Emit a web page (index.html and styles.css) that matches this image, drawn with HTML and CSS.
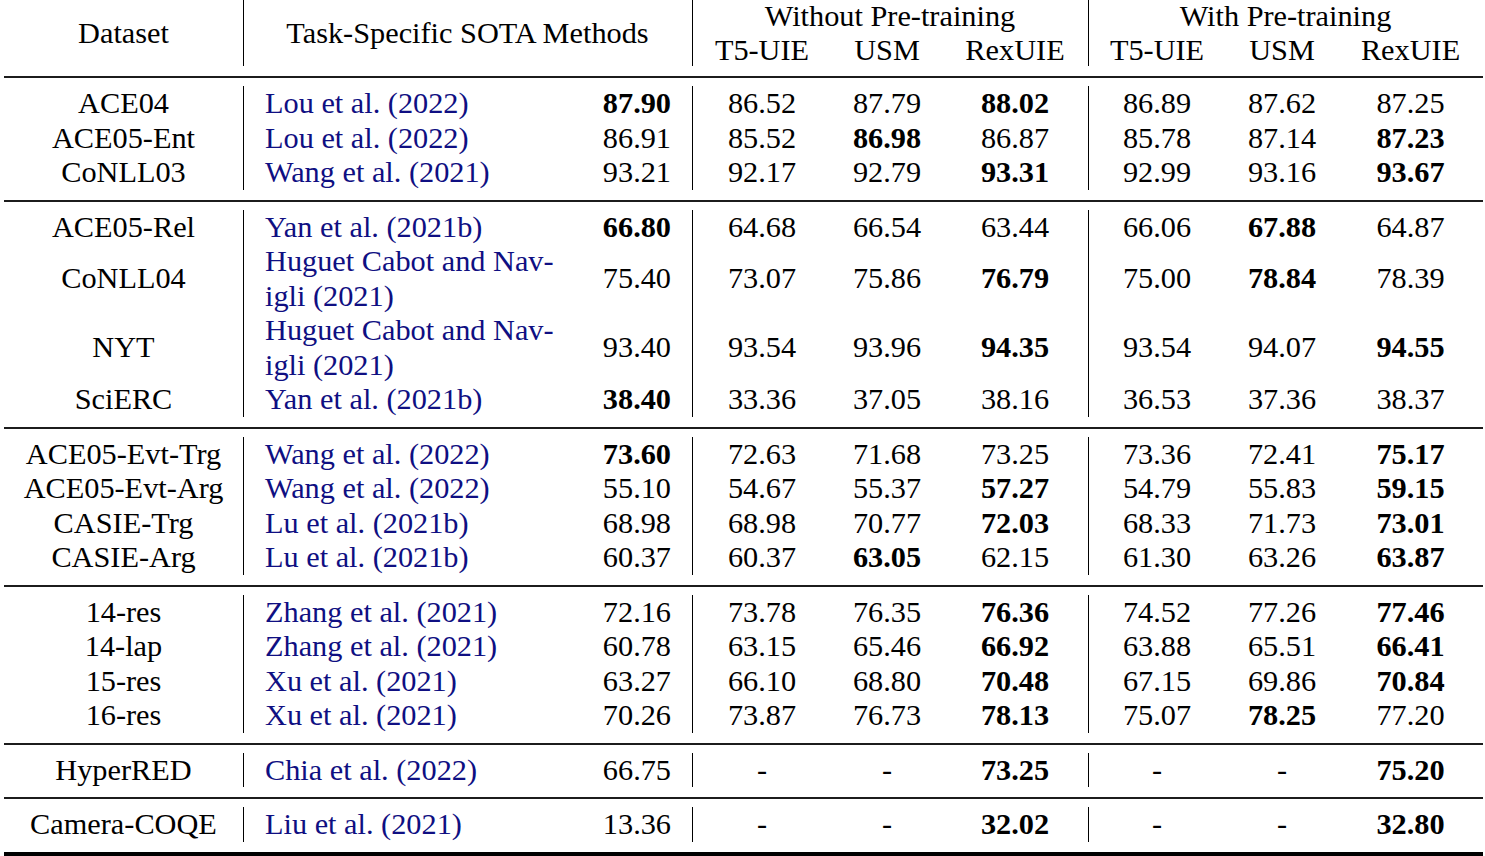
FILE: index.html
```html
<!DOCTYPE html>
<html lang="en">
<head>
<meta charset="utf-8">
<title>Results</title>
<link rel="stylesheet" href="styles.css">
</head>
<body>
<table class="results">
  <colgroup>
    <col class="c-ds"><col class="c-meth"><col class="c-sota">
    <col class="c-a1"><col class="c-a2"><col class="c-a3">
    <col class="c-b1"><col class="c-b2"><col class="c-b3">
  </colgroup>
  <thead>
    <tr class="h1">
      <th rowspan="2" class="tall">Dataset</th>
      <th rowspan="2" colspan="2" class="tall vl">Task-Specific SOTA Methods</th>
      <th colspan="3" class="vl">Without Pre-training</th>
      <th colspan="3" class="vl">With Pre-training</th>
    </tr>
    <tr class="h2">
      <th class="vl">T5-UIE</th><th>USM</th><th>RexUIE</th>
      <th class="vl">T5-UIE</th><th>USM</th><th>RexUIE</th>
    </tr>
  </thead>
  <tbody>
    <tr class="gap-a"><td colspan="9"></td></tr>
    <tr class="rule"><td colspan="9"></td></tr>
    <tr class="gap-b"><td colspan="9"></td></tr>

    <tr><td>ACE04</td><td class="meth vl">Lou et al. (2022)</td><td class="sota"><b>87.90</b></td><td class="vl">86.52</td><td>87.79</td><td><b>88.02</b></td><td class="vl">86.89</td><td>87.62</td><td>87.25</td></tr>
    <tr><td>ACE05-Ent</td><td class="meth vl">Lou et al. (2022)</td><td class="sota">86.91</td><td class="vl">85.52</td><td><b>86.98</b></td><td>86.87</td><td class="vl">85.78</td><td>87.14</td><td><b>87.23</b></td></tr>
    <tr><td>CoNLL03</td><td class="meth vl">Wang et al. (2021)</td><td class="sota">93.21</td><td class="vl">92.17</td><td>92.79</td><td><b>93.31</b></td><td class="vl">92.99</td><td>93.16</td><td><b>93.67</b></td></tr>

    <tr class="gap-a"><td colspan="9"></td></tr>
    <tr class="rule"><td colspan="9"></td></tr>
    <tr class="gap-b"><td colspan="9"></td></tr>

    <tr><td>ACE05-Rel</td><td class="meth vl">Yan et al. (2021b)</td><td class="sota"><b>66.80</b></td><td class="vl">64.68</td><td>66.54</td><td>63.44</td><td class="vl">66.06</td><td><b>67.88</b></td><td>64.87</td></tr>
    <tr><td>CoNLL04</td><td class="meth vl">Huguet Cabot and Nav-<br>igli (2021)</td><td class="sota">75.40</td><td class="vl">73.07</td><td>75.86</td><td><b>76.79</b></td><td class="vl">75.00</td><td><b>78.84</b></td><td>78.39</td></tr>
    <tr><td>NYT</td><td class="meth vl">Huguet Cabot and Nav-<br>igli (2021)</td><td class="sota">93.40</td><td class="vl">93.54</td><td>93.96</td><td><b>94.35</b></td><td class="vl">93.54</td><td>94.07</td><td><b>94.55</b></td></tr>
    <tr><td>SciERC</td><td class="meth vl">Yan et al. (2021b)</td><td class="sota"><b>38.40</b></td><td class="vl">33.36</td><td>37.05</td><td>38.16</td><td class="vl">36.53</td><td>37.36</td><td>38.37</td></tr>

    <tr class="gap-a"><td colspan="9"></td></tr>
    <tr class="rule"><td colspan="9"></td></tr>
    <tr class="gap-b"><td colspan="9"></td></tr>

    <tr><td>ACE05-Evt-Trg</td><td class="meth vl">Wang et al. (2022)</td><td class="sota"><b>73.60</b></td><td class="vl">72.63</td><td>71.68</td><td>73.25</td><td class="vl">73.36</td><td>72.41</td><td><b>75.17</b></td></tr>
    <tr><td>ACE05-Evt-Arg</td><td class="meth vl">Wang et al. (2022)</td><td class="sota">55.10</td><td class="vl">54.67</td><td>55.37</td><td><b>57.27</b></td><td class="vl">54.79</td><td>55.83</td><td><b>59.15</b></td></tr>
    <tr><td>CASIE-Trg</td><td class="meth vl">Lu et al. (2021b)</td><td class="sota">68.98</td><td class="vl">68.98</td><td>70.77</td><td><b>72.03</b></td><td class="vl">68.33</td><td>71.73</td><td><b>73.01</b></td></tr>
    <tr><td>CASIE-Arg</td><td class="meth vl">Lu et al. (2021b)</td><td class="sota">60.37</td><td class="vl">60.37</td><td><b>63.05</b></td><td>62.15</td><td class="vl">61.30</td><td>63.26</td><td><b>63.87</b></td></tr>

    <tr class="gap-a"><td colspan="9"></td></tr>
    <tr class="rule"><td colspan="9"></td></tr>
    <tr class="gap-b"><td colspan="9"></td></tr>

    <tr><td>14-res</td><td class="meth vl">Zhang et al. (2021)</td><td class="sota">72.16</td><td class="vl">73.78</td><td>76.35</td><td><b>76.36</b></td><td class="vl">74.52</td><td>77.26</td><td><b>77.46</b></td></tr>
    <tr><td>14-lap</td><td class="meth vl">Zhang et al. (2021)</td><td class="sota">60.78</td><td class="vl">63.15</td><td>65.46</td><td><b>66.92</b></td><td class="vl">63.88</td><td>65.51</td><td><b>66.41</b></td></tr>
    <tr><td>15-res</td><td class="meth vl">Xu et al. (2021)</td><td class="sota">63.27</td><td class="vl">66.10</td><td>68.80</td><td><b>70.48</b></td><td class="vl">67.15</td><td>69.86</td><td><b>70.84</b></td></tr>
    <tr><td>16-res</td><td class="meth vl">Xu et al. (2021)</td><td class="sota">70.26</td><td class="vl">73.87</td><td>76.73</td><td><b>78.13</b></td><td class="vl">75.07</td><td><b>78.25</b></td><td>77.20</td></tr>

    <tr class="gap-a"><td colspan="9"></td></tr>
    <tr class="rule"><td colspan="9"></td></tr>
    <tr class="gap-b"><td colspan="9"></td></tr>

    <tr><td>HyperRED</td><td class="meth vl">Chia et al. (2022)</td><td class="sota">66.75</td><td class="vl">-</td><td>-</td><td><b>73.25</b></td><td class="vl">-</td><td>-</td><td><b>75.20</b></td></tr>

    <tr class="gap-a"><td colspan="9"></td></tr>
    <tr class="rule"><td colspan="9"></td></tr>
    <tr class="gap-b"><td colspan="9"></td></tr>

    <tr><td>Camera-COQE</td><td class="meth vl">Liu et al. (2021)</td><td class="sota">13.36</td><td class="vl">-</td><td>-</td><td><b>32.02</b></td><td class="vl">-</td><td>-</td><td><b>32.80</b></td></tr>

    <tr class="gap-a"><td colspan="9"></td></tr>
    <tr class="rule bottom"><td colspan="9"></td></tr>
  </tbody>
</table>
</body>
</html>
```

FILE: styles.css
```css
html, body {
  margin: 0;
  padding: 0;
  background: #ffffff;
}

body {
  font-family: "Liberation Serif", "Times New Roman", serif;
  color: #000000;
}

.results {
  margin-left: 4px;
  width: 1479px;
  table-layout: fixed;
  border-collapse: separate;
  border-spacing: 0;
  font-size: 30.3px;
}

.c-ds { width: 239px; }
.c-meth { width: 342px; }
.c-sota { width: 107px; }
.c-a1 { width: 140px; }
.c-a2 { width: 110px; }
.c-a3 { width: 146px; }
.c-b1 { width: 138px; }
.c-b2 { width: 112px; }
.c-b3 { width: 145px; }

.results th,
.results td {
  padding: 0;
  font-weight: normal;
  text-align: center;
  vertical-align: middle;
  line-height: 34.5px;
  white-space: nowrap;
}

.results b {
  font-weight: bold;
}

.results .h1 th {
  line-height: 33.5px;
}

.results .h2 th {
  line-height: 32.5px;
}

.results .h1 th.tall {
  line-height: 34.5px;
}

.results .vl {
  box-shadow: inset 1px 0 0 #000000;
}

.results td.meth {
  text-align: left;
  padding-left: 22px;
  color: #0f0f82;
}

.results td.sota {
  text-align: right;
  padding-right: 21px;
}

.results .gap-a td,
.results .gap-b td,
.results .rule td {
  font-size: 0;
  line-height: 0;
  padding: 0;
}

.results .gap-a td { height: 10px; }
.results .gap-b td { height: 8px; }

.results .rule td {
  height: 2px;
  background: #1c1c1c;
}

.results .rule.bottom td {
  height: 4px;
  background: #000000;
}
```
